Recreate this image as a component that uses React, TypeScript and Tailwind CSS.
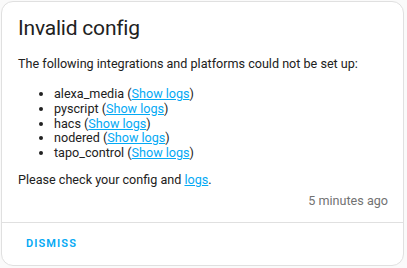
const failed = ["alexa_media", "pyscript", "hacs", "nodered", "tapo_control"]

export default function App() {
  return (
    <div className="w-[407px] h-[268px] bg-[#fafafa] pt-px pl-px font-['Roboto',sans-serif] text-[#212121]">
      <div className="w-[403px] h-[265px] bg-white border border-[#e0e0e0] rounded-[12px] flex flex-col">
        <div className="px-4 pt-[12px] text-[21px] leading-[28px] tracking-[-0.01em]">Invalid config</div>
        <div className="px-4 pt-[14px] text-[12.6px] leading-[15px] flex-1">
          <p>The following integrations and platforms could not be set up:</p>
          <ul className="list-disc pl-[36px] mt-[16px] leading-[14.75px]">
            {failed.map((name) => (
              <li key={name}>
                {name} (<a className="text-[#03a9f4] underline">Show logs</a>)
              </li>
            ))}
          </ul>
          <p className="mt-[11.5px]">
            Please check your config and <a className="text-[#03a9f4] underline">logs</a>.
          </p>
          <div className="text-right text-[#727272] mt-[6px] mr-[-1px]">5 minutes ago</div>
        </div>
        <div className="border-t border-[#e0e0e0] h-[43px] flex items-center pl-[24px]">
          <span className="text-[11px] font-semibold tracking-[0.1em] text-[#03a9f4]">DISMISS</span>
        </div>
      </div>
    </div>
  )
}
